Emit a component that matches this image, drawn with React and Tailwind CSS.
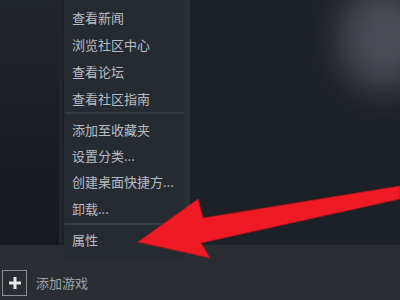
import React from "react";

const font = { fontFamily: '"Noto Sans CJK SC", "Noto Sans", sans-serif' };

function Item({ children }) {
  return (
    <div className="h-[27px] flex items-center pl-2 text-[13px] text-[#b9bdc3] whitespace-nowrap leading-none">
      {children}
    </div>
  );
}

function Sep({ top = 1, bottom = 3 }) {
  return (
    <div className="px-[1px]" style={{ paddingTop: top, paddingBottom: bottom }}>
      <div className="h-[2px] bg-[#363a41]" />
    </div>
  );
}

export default function App() {
  return (
    <div
      className="relative w-[400px] h-[300px] overflow-hidden bg-[#1c2027] flex flex-col"
      style={font}
    >
      <div className="flex flex-1">
        <div className="w-[62px] bg-gradient-to-b from-[#21252c] to-[#15181c] border-r-[3px] border-[#22262c]" />
        <div className="relative flex-1 overflow-hidden">
          <div className="absolute right-[-30px] top-[-15px] w-[90px] h-[105px] rounded-full bg-[#4a4d55] blur-[18px]" />
        </div>
      </div>
      <div className="h-[55px] bg-[#2a2d32] flex items-end pb-[4px] pl-[2px] gap-[9px]">
        <div className="w-[25px] h-[26px] border border-[#8b8e93] flex items-center justify-center">
          <svg width="14" height="14" viewBox="0 0 14 14">
            <rect x="5.5" y="1" width="3" height="12" fill="#e6e7e9" />
            <rect x="1" y="5.5" width="12" height="3" fill="#e6e7e9" />
          </svg>
        </div>
        <div className="h-[26px] flex items-center text-[13px] text-[#9fa3a9]">添加游戏</div>
      </div>

      <div className="absolute left-[64px] top-0 w-[126px] h-[258px] bg-[#262a31] border-r-[5px] border-[#2c3037] pt-[4px]">
        <Item>查看新闻</Item>
        <Item>浏览社区中心</Item>
        <Item>查看论坛</Item>
        <Item>查看社区指南</Item>
        <Sep top={0} bottom={2} />
        <div className="h-[26px] flex items-center pl-2 text-[13px] text-[#b9bdc3] whitespace-nowrap leading-none">添加至收藏夹</div>
        <div className="h-[26px] flex items-center pl-2 text-[13px] text-[#b9bdc3] whitespace-nowrap leading-none">设置分类...</div>
        <Item>创建桌面快捷方...</Item>
        <Item>卸载...</Item>
        <Sep top={1} bottom={1} />
        <Item>属性</Item>
      </div>

      <svg className="absolute inset-0" width="400" height="300" viewBox="0 0 400 300">
        <polygon
          points="138,242 198,199 203,218 400,186 400,199 201,243 210,258"
          fill="#ee1b24"
          stroke="#b0141a"
          strokeWidth="0.8"
          strokeLinejoin="round"
        />
      </svg>
    </div>
  );
}
